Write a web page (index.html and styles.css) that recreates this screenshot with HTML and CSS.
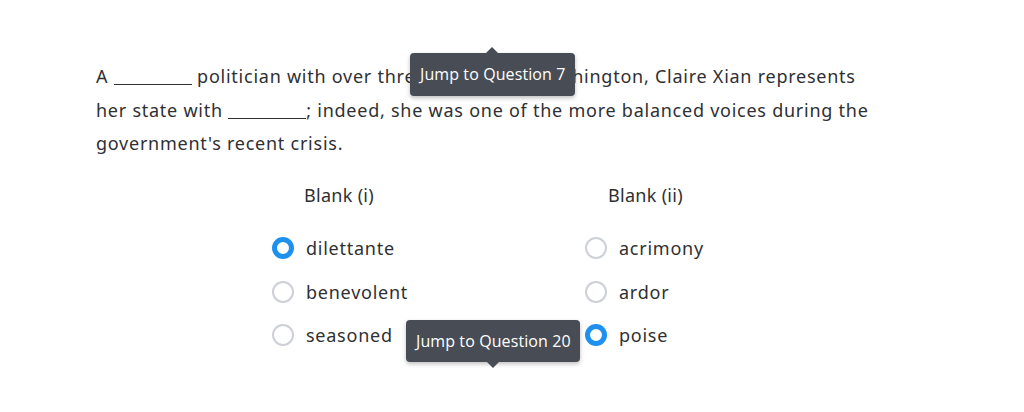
FILE: index.html
```html
<!DOCTYPE html>
<html>
<head>
<meta charset="utf-8">
<link rel="stylesheet" href="styles.css">
</head>
<body>
<main class="page">
  <p class="stem">A <span class="blank"></span> politician with over three decades in Washington, Claire Xian represents her state with <span class="blank"></span>; indeed, she was one of the more balanced voices during the government's recent crisis.</p>
  <div class="blanks">
    <div class="col">
      <div class="col-title">Blank (i)</div>
      <label class="opt"><span class="radio checked"></span><span>dilettante</span></label>
      <label class="opt"><span class="radio"></span><span>benevolent</span></label>
      <label class="opt"><span class="radio"></span><span>seasoned</span></label>
    </div>
    <div class="col col-2">
      <div class="col-title">Blank (ii)</div>
      <label class="opt"><span class="radio"></span><span>acrimony</span></label>
      <label class="opt"><span class="radio"></span><span>ardor</span></label>
      <label class="opt"><span class="radio checked"></span><span>poise</span></label>
    </div>
  </div>
  <div class="tip tip-top">Jump to Question 7</div>
  <div class="tip tip-bottom">Jump to Question 20</div>
</main>
</body>
</html>
```
FILE: styles.css
```css
html, body {
  margin: 0;
  padding: 0;
  background: #fff;
}
.page {
  position: relative;
  width: 1024px;
  height: 412px;
  box-sizing: border-box;
  padding: 60px 0 0 96px;
  font-family: "Noto Sans", sans-serif;
  color: #2f3033;
  letter-spacing: 0.75px;
}
.stem {
  margin: 0;
  width: 790px;
  font-size: 18px;
  line-height: 33.5px;
}
.blank {
  display: inline-block;
  width: 78px;
  border-bottom: 1px solid #2f3033;
  height: 1px;
  vertical-align: baseline;
  margin-bottom: -2px;
}
.blanks {
  display: grid;
  grid-template-columns: 314px 314px;
  margin: 16px 0 0 176px;
}
.col {
  display: flex;
  flex-direction: column;
}
.col-title {
  font-size: 18px;
  line-height: 36px;
  padding-left: 32px;
  margin-bottom: 14px;
  letter-spacing: 0.3px;
}
.col-2 .col-title {
  padding-left: 22px;
}
.opt {
  display: flex;
  align-items: center;
  gap: 12px;
  height: 43.5px;
  font-size: 18px;
}
.col-2 .opt {
  margin-left: -1px;
}
.radio {
  width: 22px;
  height: 22px;
  box-sizing: border-box;
  border-radius: 50%;
  border: 2px solid #cdd0d6;
  background: #fff;
}
.radio.checked {
  border: 5px solid #1e90f0;
}
.tip {
  position: absolute;
  background: #484d55;
  color: #fff;
  font-family: "Open Sans", sans-serif;
  font-size: 16px;
  letter-spacing: 0.1px;
  border-radius: 4px;
  padding: 0 9px 0 10px;
  height: 43px;
  line-height: 43px;
  box-shadow: 0 2px 4px rgba(0,0,0,0.25);
  white-space: nowrap;
}
.tip::after {
  content: "";
  position: absolute;
  left: 50%;
  margin-left: -6px;
  border: 6px solid transparent;
}
.tip-top {
  left: 410px;
  top: 53px;
}
.tip-top::after {
  bottom: 100%;
  border-bottom-color: #484d55;
}
.tip-bottom {
  left: 406px;
  top: 320px;
  height: 42px;
  line-height: 42px;
}
.tip-bottom::after {
  top: 100%;
  border-top-color: #484d55;
}
```
